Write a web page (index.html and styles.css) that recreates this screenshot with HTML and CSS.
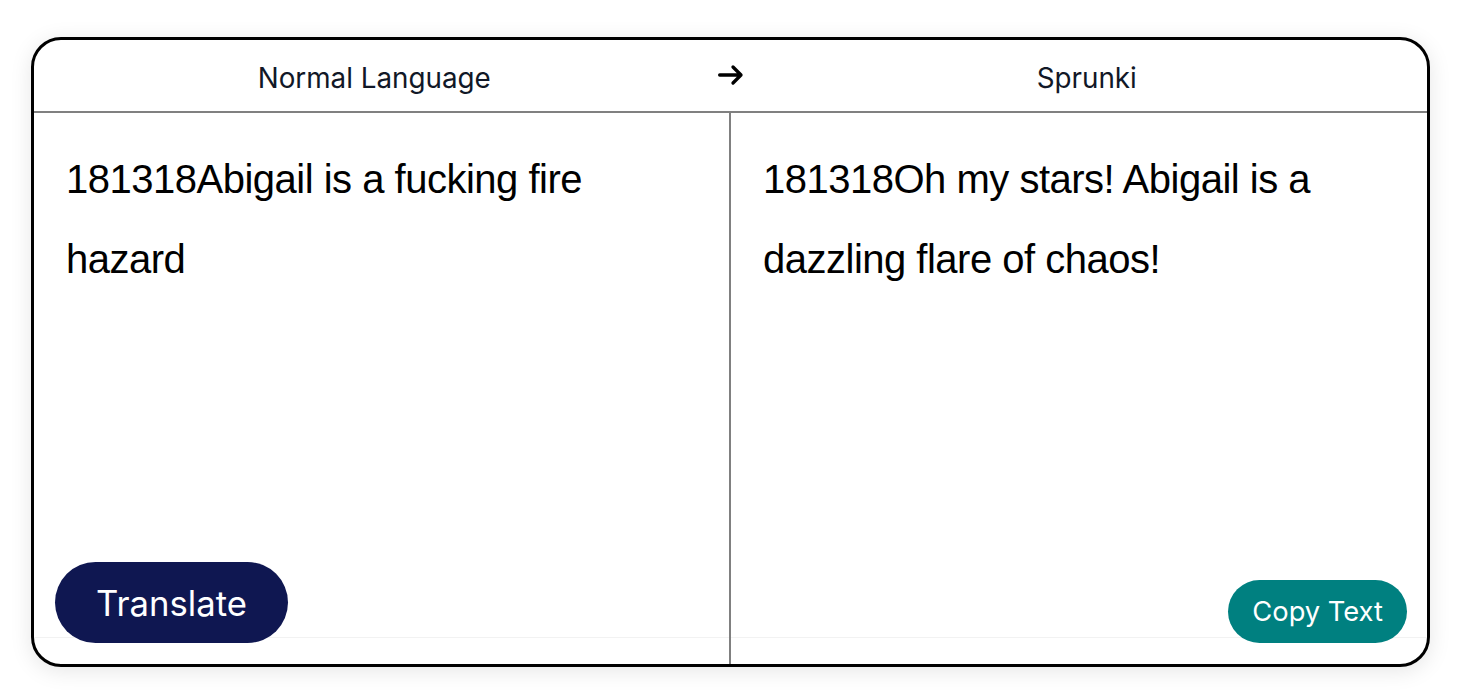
FILE: index.html
```html
<!DOCTYPE html>
<html lang="en">
<head>
<meta charset="utf-8">
<title>Sprunki Translator</title>
<link rel="stylesheet" href="styles.css">
</head>
<body>
<main class="card">
  <header class="head">
    <div class="lang">Normal Language</div>
    <div class="arrow">
      <svg width="32" height="32" viewBox="0 0 24 24" fill="none" stroke="#000" stroke-width="2.5" stroke-linecap="round" stroke-linejoin="round"><path d="M3.5 12h16M13.5 6l6 6-6 6"/></svg>
    </div>
    <div class="lang">Sprunki</div>
  </header>
  <section class="panes">
    <div class="pane left">
      <div class="text">181318Abigail is a fucking fire hazard</div>
      <button class="btn translate">Translate</button>
    </div>
    <div class="pane right">
      <div class="text">181318Oh my stars! Abigail is a dazzling flare of chaos!</div>
      <button class="btn copy">Copy Text</button>
    </div>
  </section>
</main>
</body>
</html>
```
FILE: styles.css
```css
* { box-sizing: border-box; }
html, body { margin: 0; background: #fff; }
body {
  padding: 37px 30px 30px 31px;
  font-family: "Liberation Sans", Arial, sans-serif;
}
.card {
  width: 1399px;
  height: 630px;
  border: 3px solid #000;
  border-radius: 30px;
  box-shadow: 0 4px 22px rgba(0, 0, 0, 0.1);
  display: flex;
  flex-direction: column;
  overflow: hidden;
  background: #fff;
}
.head {
  height: 73px;
  flex: none;
  display: grid;
  grid-template-columns: 1fr 32px 1fr;
  align-items: center;
  border-bottom: 2px solid #808080;
}
.lang {
  text-align: center;
  font-family: Inter, "Noto Sans", sans-serif;
  font-size: 27.8px;
  color: #111827;
  padding-top: 5px;
}
.arrow { display: flex; justify-content: center; padding-bottom: 2px; }
.panes {
  flex: 1;
  display: grid;
  grid-template-columns: 695px 2px 1fr;
}
.pane { position: relative; display: flex; flex-direction: column; }
.pane.left { border-right: 2px solid #808080; grid-column: 1 / 3; }
.text {
  flex: 1;
  margin-bottom: 26px;
  border-bottom: 1px solid #f2f2f2;
  padding: 26px 32px 0 32px;
  font-size: 40px;
  letter-spacing: -0.5px;
  line-height: 80px;
  color: #000;
}
.btn {
  position: absolute;
  bottom: 21px;
  border: 0;
  border-radius: 999px;
  color: #fff;
  font-family: Inter, "Noto Sans", sans-serif;
  cursor: pointer;
}
.translate {
  left: 21px;
  height: 81px;
  padding: 0 41px;
  font-size: 34.7px;
  background: #0f1751;
}
.copy {
  right: 20px;
  height: 63px;
  padding: 0 24px;
  font-size: 27.3px;
  background: #008080;
}
```
